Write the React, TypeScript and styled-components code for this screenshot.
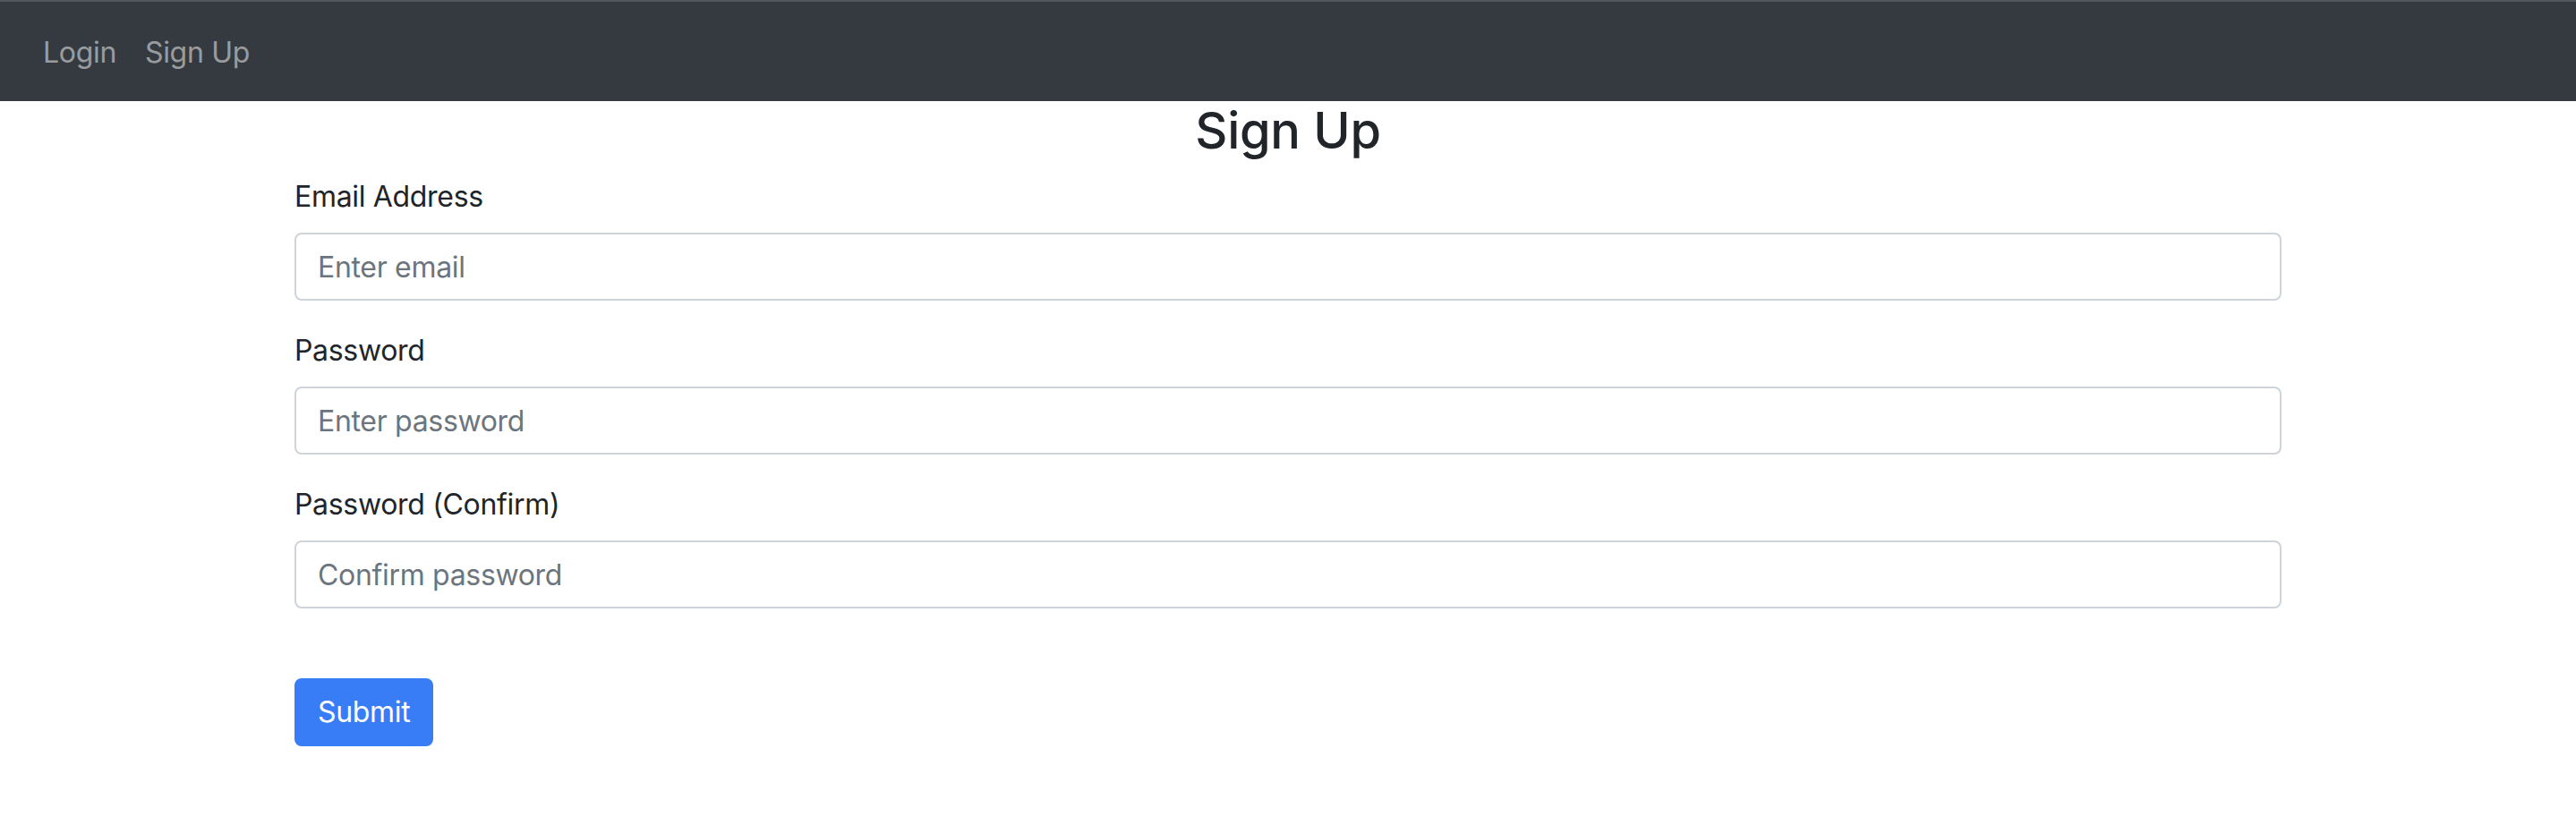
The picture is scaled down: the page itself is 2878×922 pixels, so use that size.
import React from "react";
import styled, { createGlobalStyle } from "styled-components";

const GlobalStyle = createGlobalStyle`
  html, body {
    margin: 0;
    padding: 0;
    background: #ffffff;
    font-family: Inter, "Noto Sans", "Liberation Sans", sans-serif;
    letter-spacing: -0.02em;
    color: #212529;
  }
  * {
    box-sizing: border-box;
  }
`;

const Navbar = styled.nav`
  display: flex;
  align-items: center;
  height: 113px;
  padding: 2px 32px 0;
  background-color: #343a40;
  border-top: 2px solid #54585c;
`;

const NavLink = styled.a`
  padding: 0 16px;
  font-size: 32px;
  line-height: 48px;
  color: rgba(255, 255, 255, 0.5);
  text-decoration: none;
  cursor: pointer;
`;

const Container = styled.div`
  max-width: 2280px;
  margin: 0 auto;
  padding: 0 30px;
`;

const Title = styled.h3`
  margin: 0 0 16px 0;
  font-size: 56px;
  font-weight: 500;
  line-height: 1.2;
  text-align: center;
  color: #212529;
`;

const FormGroup = styled.div`
  margin-bottom: 32px;
`;

const Label = styled.label`
  display: block;
  margin-bottom: 16px;
  font-size: 32px;
  line-height: 48px;
  color: #212529;
`;

const Input = styled.input`
  display: block;
  width: 100%;
  height: 76px;
  padding: 12px 24px;
  font-family: inherit;
  font-size: 32px;
  line-height: 48px;
  letter-spacing: inherit;
  color: #495057;
  background: #ffffff;
  border: 2px solid #ced4da;
  border-radius: 8px;
  outline: none;

  &::placeholder {
    color: #6c757d;
  }
`;

const SubmitButton = styled.button`
  margin-top: 46px;
  height: 76px;
  padding: 12px 24px;
  font-family: inherit;
  font-size: 32px;
  line-height: 48px;
  letter-spacing: inherit;
  color: #ffffff;
  background-color: #387df6;
  border: 2px solid #387df6;
  border-radius: 8px;
  cursor: pointer;
`;

const fields = [
  { label: "Email Address", type: "email", placeholder: "Enter email" },
  { label: "Password", type: "password", placeholder: "Enter password" },
  { label: "Password (Confirm)", type: "password", placeholder: "Confirm password" },
];

const App: React.FC = () => {
  return (
    <>
      <GlobalStyle />
      <Navbar>
        <NavLink>Login</NavLink>
        <NavLink>Sign Up</NavLink>
      </Navbar>
      <Container>
        <Title>Sign Up</Title>
        <form onSubmit={(e) => e.preventDefault()}>
          {fields.map((f) => (
            <FormGroup key={f.label}>
              <Label>{f.label}</Label>
              <Input type={f.type} placeholder={f.placeholder} />
            </FormGroup>
          ))}
          <SubmitButton type="submit">Submit</SubmitButton>
        </form>
      </Container>
    </>
  );
};

export default App;
